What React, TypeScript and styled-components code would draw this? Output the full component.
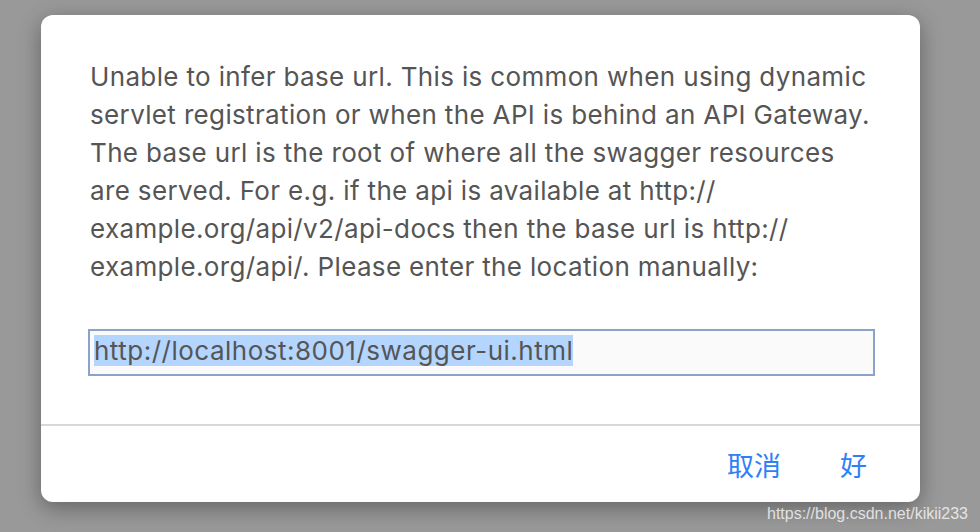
import React from "react";
import styled, { createGlobalStyle } from "styled-components";

const GlobalStyle = createGlobalStyle`
  html, body {
    margin: 0;
    padding: 0;
    background: #999999;
  }
  body {
    font-family: Inter, "Liberation Sans", Arial, sans-serif;
  }
`;

const Backdrop = styled.div`
  width: 980px;
  height: 532px;
  box-sizing: border-box;
  padding: 15px 0 0 41px;
  background: #999999;
  position: relative;
  overflow: hidden;
`;

const Dialog = styled.div`
  width: 879px;
  height: 487px;
  background: #ffffff;
  border-radius: 12px;
  box-shadow: 0 6px 22px rgba(0, 0, 0, 0.35);
  display: flex;
  flex-direction: column;
  overflow: hidden;
`;

const Body = styled.div`
  flex: 1;
  padding: 43px 20px 0 49px;
`;

const Message = styled.p`
  margin: 0;
  font-size: 26px;
  line-height: 38px;
  color: #555555;
  letter-spacing: 0.35px;
  white-space: nowrap;
`;

const UrlInput = styled.div`
  margin: 43px 0 0 -2px;
  width: 787px;
  height: 47px;
  box-sizing: border-box;
  border: 2px solid #8ba2cb;
  background: #fafafa;
  padding: 4px 0 0 4px;
  font-size: 26px;
  line-height: 32px;
  color: #555555;
  letter-spacing: 0.5px;
`;

const Selected = styled.span`
  background: #b4d5fe;
`;

const Footer = styled.div`
  height: 78px;
  border-top: 2px solid #d8d8d8;
  display: flex;
  justify-content: flex-end;
  align-items: center;
  gap: 59px;
  padding-right: 53px;
  box-sizing: border-box;
`;

const ActionButton = styled.button`
  border: none;
  background: none;
  padding: 0;
  font-family: "Noto Sans CJK SC", sans-serif;
  font-size: 27px;
  color: #2f80f6;
  cursor: pointer;
  line-height: 1;
`;

const Watermark = styled.div`
  position: absolute;
  right: 12px;
  bottom: 9px;
  font-family: "Liberation Sans", Arial, sans-serif;
  font-size: 16px;
  color: rgba(255, 255, 255, 0.75);
`;

export default function App() {
  return (
    <>
      <GlobalStyle />
      <Backdrop>
        <Dialog>
          <Body>
            <Message>
              Unable to infer base url. This is common when using dynamic
              <br />
              servlet registration or when the API is behind an API Gateway.
              <br />
              The base url is the root of where all the swagger resources
              <br />
              are served. For e.g. if the api is available at http://
              <br />
              example.org/api/v2/api-docs then the base url is http://
              <br />
              example.org/api/. Please enter the location manually:
            </Message>
            <UrlInput>
              <Selected>http://localhost:8001/swagger-ui.html</Selected>
            </UrlInput>
          </Body>
          <Footer>
            <ActionButton>取消</ActionButton>
            <ActionButton>好</ActionButton>
          </Footer>
        </Dialog>
        <Watermark>https://blog.csdn.net/kikii233</Watermark>
      </Backdrop>
    </>
  );
}
